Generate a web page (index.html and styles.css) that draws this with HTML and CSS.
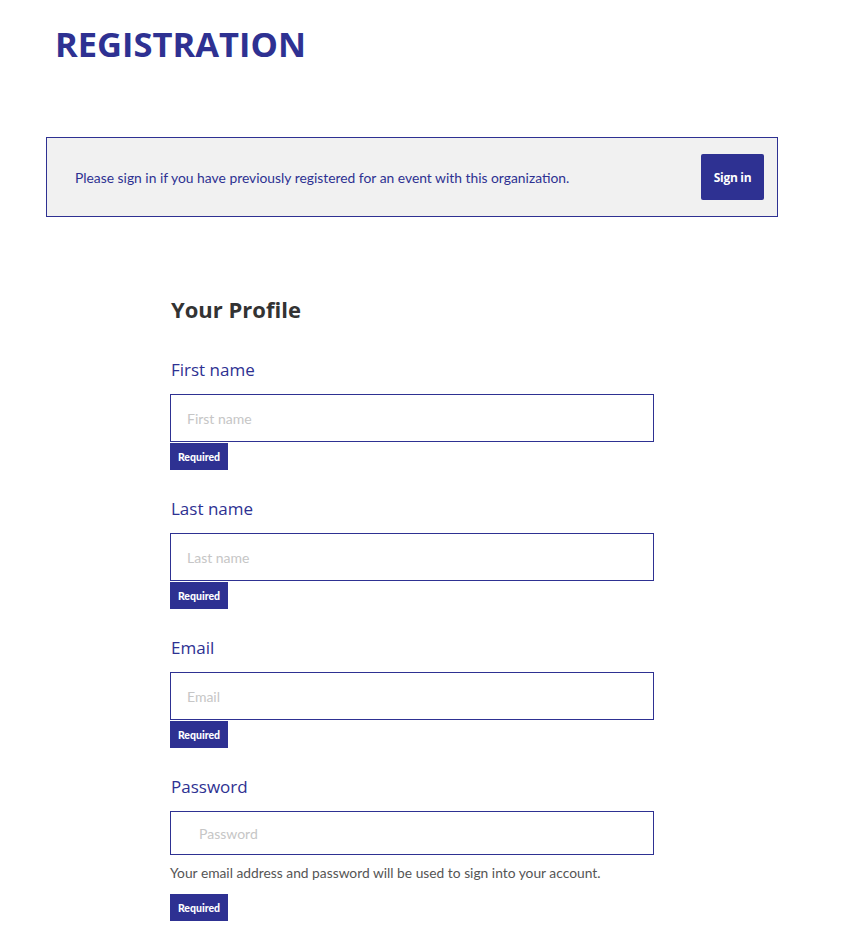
FILE: index.html
```html
<!DOCTYPE html>
<html lang="en">
<head>
<meta charset="utf-8">
<title>Registration</title>
<link rel="stylesheet" href="styles.css">
</head>
<body>
<header class="page-header">
  <h1 class="page-title">REGISTRATION</h1>
</header>

<section class="signin-banner">
  <p class="signin-text">Please sign in if you have previously registered for an event with this organization.</p>
  <button class="signin-btn" type="button">Sign in</button>
</section>

<form class="profile-form">
  <h2 class="section-title">Your Profile</h2>

  <div class="field">
    <label class="field-label" for="fn">First name</label>
    <input class="field-input" id="fn" type="text" placeholder="First name">
    <span class="badge">Required</span>
  </div>

  <div class="field">
    <label class="field-label" for="ln">Last name</label>
    <input class="field-input" id="ln" type="text" placeholder="Last name">
    <span class="badge">Required</span>
  </div>

  <div class="field">
    <label class="field-label" for="em">Email</label>
    <input class="field-input" id="em" type="email" placeholder="Email">
    <span class="badge">Required</span>
  </div>

  <div class="field">
    <label class="field-label" for="pw">Password</label>
    <input class="field-input field-input--password" id="pw" type="password" placeholder="Password">
    <p class="help-text">Your email address and password will be used to sign into your account.</p>
    <span class="badge">Required</span>
  </div>
</form>
</body>
</html>
```

FILE: styles.css
```css
* { box-sizing: border-box; }

html, body {
  margin: 0;
  padding: 0;
  background: #ffffff;
}

body {
  font-family: "Lato", "Liberation Sans", sans-serif;
  color: #333333;
}

.page-header {
  padding: 22px 0 0 55px;
}

.page-title {
  margin: 0;
  font-family: "Open Sans", "Liberation Sans", sans-serif;
  font-weight: 700;
  font-size: 34.5px;
  line-height: 44px;
  color: #2e3192;
}

.signin-banner {
  margin: 71px 0 0 46px;
  width: 732px;
  height: 80px;
  border: 1px solid #2e3192;
  background: #f1f1f1;
  display: flex;
  align-items: center;
  justify-content: space-between;
  padding: 0 13px 0 28px;
}

.signin-text {
  margin: 0;
  font-size: 13.85px;
  color: #2e3192;
}

.signin-btn {
  width: 63px;
  height: 46px;
  border: none;
  border-radius: 2px;
  background: #2e3192;
  color: #ffffff;
  font-family: "Open Sans", "Liberation Sans", sans-serif;
  font-weight: 700;
  font-size: 12px;
  letter-spacing: -0.3px;
  padding: 0;
}

.profile-form {
  margin: 77px 0 0 170px;
  width: 484px;
}

.section-title {
  margin: 0 0 0 1px;
  font-family: "Open Sans", "Liberation Sans", sans-serif;
  font-weight: 700;
  font-size: 22px;
  line-height: 30px;
  color: #333333;
}

.field {
  display: flex;
  flex-direction: column;
  align-items: flex-start;
  margin-top: 34px;
}

.field + .field {
  margin-top: 27px;
}

.field-label {
  font-family: "Open Sans", "Liberation Sans", sans-serif;
  font-size: 17px;
  line-height: 24px;
  color: #2e3192;
  margin: 0 0 12px 1px;
}

.field-input {
  width: 484px;
  height: 48px;
  border: 1px solid #2e3192;
  border-radius: 0;
  background: #ffffff;
  padding: 0 16px;
  font-family: "Lato", "Liberation Sans", sans-serif;
  font-size: 14px;
  color: #333333;
  outline: none;
}

.field-input::placeholder {
  color: #c6c6c6;
}

.field-input--password {
  height: 44px;
  padding-left: 28px;
}

.help-text {
  margin: 10px 0 0 0;
  font-size: 13.8px;
  line-height: 16px;
  color: #555555;
}

.badge {
  margin-top: 1px;
  display: inline-flex;
  align-items: center;
  justify-content: center;
  width: 58px;
  height: 27px;
  background: #2e3192;
  color: #ffffff;
  font-family: "Lato", "Liberation Sans", sans-serif;
  font-weight: 900;
  font-size: 10.5px;
}

.help-text + .badge {
  margin-top: 13px;
}
```
